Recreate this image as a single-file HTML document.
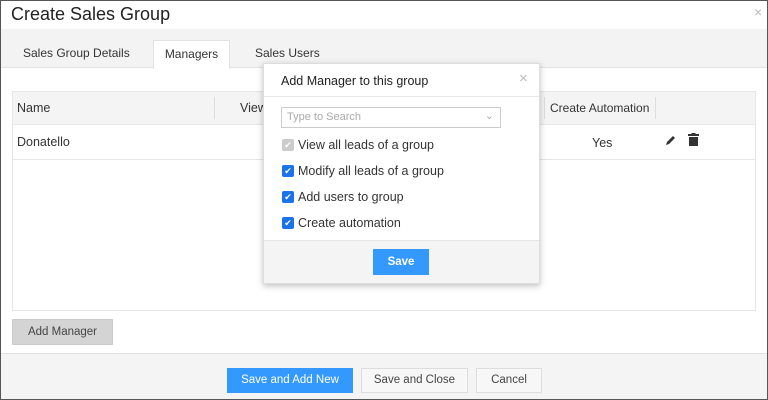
<!DOCTYPE html>
<html><head><style>
*{box-sizing:border-box;margin:0;padding:0}
body{width:768px;height:400px;overflow:hidden;font-family:"Liberation Sans",sans-serif;color:#333;background:#fff;position:relative}
.frame{position:absolute;left:0;top:0;width:768px;height:400px;border:1px solid #555;}
.abs{position:absolute}
.title{left:11px;top:4px;font-size:18px;color:#222}
.hdr{left:1px;top:29px;width:766px;height:39px;background:#f3f3f3;border-bottom:1px solid #e2e2e2}
.tab{top:40px;height:28px;font-size:12px;color:#333;padding-top:6px}
.btn{font-size:11.5px;text-align:center;border:1px solid #ddd;background:#f7f7f7;color:#444}
.cb{width:12px;height:12px;background:#1a73e8;border-radius:2px;color:#fff;font-size:9px;line-height:12px;text-align:center}
.lbl{font-size:12.5px;color:#333}
</style></head><body>
<div class="frame"></div>
<div class="abs title">Create Sales Group</div>
<div class="abs" style="left:754px;top:4px;color:#bbb;font-size:14px">×</div>
<div class="abs hdr"></div>
<div class="abs tab" style="left:23px">Sales Group Details</div>
<div class="abs tab" style="left:153px;width:77px;background:#fff;border:1px solid #e2e2e2;border-bottom:none;text-align:center;height:29px">Managers</div>
<div class="abs tab" style="left:255px">Sales Users</div>
<div class="abs" style="left:12px;top:91px;width:744px;height:220px;border:1px solid #e6e6e6"></div>
<div class="abs" style="left:13px;top:92px;width:742px;height:33px;background:#f4f4f4;border-bottom:1px solid #e6e6e6"></div>
<div class="abs" style="left:13px;top:159px;width:742px;height:1px;background:#e6e6e6"></div>
<div class="abs lbl" style="left:17px;top:101px">Name</div>
<div class="abs" style="left:214px;top:97px;width:1px;height:22px;background:#ddd"></div>
<div class="abs lbl" style="left:240px;top:101px">View</div>
<div class="abs" style="left:544px;top:97px;width:1px;height:22px;background:#ddd"></div>
<div class="abs lbl" style="left:550px;top:101px;font-size:12px">Create Automation</div>
<div class="abs" style="left:655px;top:97px;width:1px;height:22px;background:#ddd"></div>
<div class="abs lbl" style="left:17px;top:135px">Donatello</div>
<div class="abs lbl" style="left:592px;top:136px">Yes</div>
<svg class="abs" style="left:665px;top:134px" width="12" height="12" viewBox="0 0 12 12"><path d="M1 11 L2 8 L8 2 L10 4 L4 10 Z" fill="#333"/></svg>
<svg class="abs" style="left:688px;top:133px" width="11" height="13" viewBox="0 0 11 13"><rect x="0" y="1" width="11" height="2" fill="#333"/><rect x="3.5" y="0" width="4" height="2" fill="#333"/><rect x="1" y="4" width="9" height="9" fill="#333"/></svg>
<div class="abs btn" style="left:12px;top:319px;width:101px;height:26px;line-height:24px;background:#d4d4d4;border-color:#ccc">Add Manager</div>
<div class="abs" style="left:1px;top:353px;width:766px;height:46px;background:#f4f4f4;border-top:1px solid #e0e0e0"></div>
<div class="abs btn" style="left:227px;top:368px;width:126px;height:25px;line-height:23px;background:#3399ff;border-color:#3399ff;color:#fff">Save and Add New</div>
<div class="abs btn" style="left:361px;top:368px;width:107px;height:25px;line-height:23px">Save and Close</div>
<div class="abs btn" style="left:476px;top:368px;width:66px;height:25px;line-height:23px">Cancel</div>
<!-- popup -->
<div class="abs" style="left:263px;top:63px;width:277px;height:221px;background:#fff;border:1px solid #ddd;box-shadow:0 2px 6px rgba(0,0,0,.25)"></div>
<div class="abs" style="left:281px;top:74px;font-size:12.5px;color:#222">Add Manager to this group</div>
<div class="abs" style="left:519px;top:70px;color:#bbb;font-size:15px">×</div>
<div class="abs" style="left:264px;top:96px;width:275px;height:1px;background:#e6e6e6"></div>
<div class="abs" style="left:281px;top:107px;width:220px;height:21px;border:1px solid #ccc;font-size:11px;color:#aaa;padding:3px 5px">Type to Search<span style="position:absolute;right:6px;top:1px;color:#aaa">⌄</span></div>
<div class="abs cb" style="left:282px;top:139px;background:#ccc">✔</div>
<div class="abs lbl" style="left:298px;top:138px">View all leads of a group</div>
<div class="abs cb" style="left:282px;top:165px">✔</div>
<div class="abs lbl" style="left:298px;top:164px">Modify all leads of a group</div>
<div class="abs cb" style="left:282px;top:191px">✔</div>
<div class="abs lbl" style="left:298px;top:190px">Add users to group</div>
<div class="abs cb" style="left:282px;top:217px">✔</div>
<div class="abs lbl" style="left:298px;top:216px">Create automation</div>
<div class="abs" style="left:264px;top:240px;width:275px;height:43px;background:#f4f4f4;border-top:1px solid #e6e6e6"></div>
<div class="abs btn" style="left:373px;top:249px;width:56px;height:26px;line-height:24px;background:#3399ff;border-color:#3399ff;color:#fff;font-weight:bold">Save</div>
</body></html>
